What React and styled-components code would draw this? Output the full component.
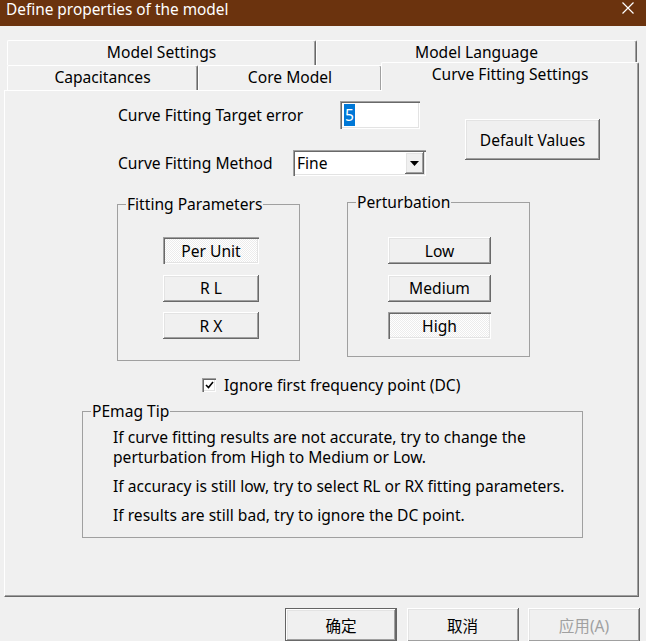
import React from 'react';
import styled, { createGlobalStyle, css } from 'styled-components';

const GlobalStyle = createGlobalStyle`
  html, body {
    margin: 0;
    padding: 0;
    background: #f0f0f0;
  }
  * {
    box-sizing: border-box;
  }
`;

const FONT = `"Noto Sans", "Noto Sans CJK SC", sans-serif`;

const raised = css`
  background: #f0f0f0;
  box-shadow: inset -1px -1px #696969, inset 1px 1px #fff, inset -2px -2px #a0a0a0,
    inset 2px 2px #e3e3e3;
`;

const pressed = css`
  background: repeating-conic-gradient(#fff 0 25%, #ececec 0 50%) 0 0 / 2px 2px;
  box-shadow: inset 1px 1px #a0a0a0, inset 2px 2px #696969, inset -1px -1px #fff,
    inset -2px -2px #e3e3e3;
`;

const sunken = css`
  background: #fff;
  box-shadow: inset 1px 1px #a0a0a0, inset 2px 2px #696969, inset -1px -1px #fff,
    inset -2px -2px #e3e3e3;
`;

const Window = styled.div`
  width: 646px;
  height: 641px;
  overflow: hidden;
  background: #f0f0f0;
  font-family: ${FONT};
  font-size: 15.6px;
  color: #000;
  display: flex;
  flex-direction: column;
`;

const TitleBar = styled.div`
  height: 26px;
  flex-shrink: 0;
  background: #6b330e;
  display: flex;
  justify-content: space-between;
  padding: 0 12px 0 6px;
`;

const Title = styled.div`
  color: #fff;
  font-size: 15.4px;
  line-height: 20px;
`;

const CloseIcon = styled.svg`
  width: 12px;
  height: 12px;
  margin-top: 2px;
`;

const Body = styled.div`
  padding: 14px 7px 0 4px;
  display: flex;
  flex-direction: column;
`;

const TabStrip = styled.div`
  padding-left: 3px;
  display: flex;
  flex-direction: column;
`;

const TabRow = styled.div`
  display: flex;
  height: 25px;
  align-items: flex-end;
`;

const Tab = styled.div`
  width: ${(p) => p.$w}px;
  height: ${(p) => (p.$active ? 29 : 25)}px;
  flex-shrink: 0;
  margin-left: ${(p) => p.$ml || 0}px;
  margin-bottom: ${(p) => (p.$active ? -1 : 0)}px;
  position: relative;
  z-index: ${(p) => (p.$active ? 2 : 1)};
  background: #f0f0f0;
  border-top: 1px solid #fff;
  border-left: 1px solid #fff;
  border-right: 1px solid #696969;
  border-radius: 2px 2px 0 0;
  box-shadow: inset -1px 0 #a0a0a0;
  line-height: ${(p) => (p.$active ? 22 : 23)}px;
  text-align: center;
  white-space: nowrap;
`;

const Panel = styled.div`
  width: 635px;
  height: 507px;
  border-top: 1px solid #fff;
  border-left: 1px solid #fff;
  border-right: 1px solid #696969;
  border-bottom: 1px solid #696969;
  box-shadow: inset -1px -1px #a0a0a0;
  padding-top: 10px;
  display: flex;
  flex-direction: column;
`;

const TopSection = styled.div`
  display: flex;
  padding-left: 113px;
`;

const FormCol = styled.div`
  display: flex;
  flex-direction: column;
  gap: 21px;
`;

const FieldRow = styled.div`
  display: flex;
  align-items: center;
  height: ${(p) => p.$h}px;
`;

const Label = styled.span`
  width: ${(p) => p.$w}px;
  flex-shrink: 0;
  white-space: nowrap;
`;

const TextInput = styled.div`
  ${sunken};
  width: 80px;
  height: 28px;
  padding: 4px 0 0 4px;
  line-height: 20px;
`;

const Selected = styled.span`
  background: #0078d7;
  color: #fff;
  padding: 0 1px;
`;

const Select = styled.div`
  ${sunken};
  width: 133px;
  height: 26px;
  display: flex;
  align-items: center;
  justify-content: space-between;
  padding: 2px 2px 2px 4px;
`;

const ArrowButton = styled.div`
  ${raised};
  width: 19px;
  height: 22px;
  display: flex;
  align-items: center;
  justify-content: center;
`;

const Button = styled.div`
  ${(p) => (p.$pressed ? pressed : raised)};
  width: ${(p) => p.$w}px;
  height: ${(p) => p.$h}px;
  flex-shrink: 0;
  display: flex;
  align-items: center;
  justify-content: center;
  white-space: nowrap;
  color: ${(p) => (p.$disabled ? '#a0a0a0' : '#000')};
  ${(p) =>
    p.$default &&
    css`
      border: 1px solid #646464;
    `}
`;

const DefaultButton = styled(Button)`
  margin-left: 39px;
  margin-top: 18px;
`;

const GroupsRow = styled.div`
  display: flex;
  align-items: flex-start;
  gap: 47px;
  padding-left: 112px;
  margin-top: 17px;
`;

const Group = styled.fieldset`
  width: ${(p) => p.$w}px;
  height: ${(p) => p.$h}px;
  margin: ${(p) => p.$mt || 0}px 0 0 0;
  padding: 0;
  border: 1px solid #a0a0a0;
  min-width: 0;
`;

const Legend = styled.legend`
  margin-left: 8px;
  padding: 0 1px;
  line-height: 18px;
  white-space: nowrap;
`;

const ButtonStack = styled.div`
  display: flex;
  flex-direction: column;
  gap: 10.5px;
  padding: ${(p) => p.$pt}px 0 0 ${(p) => p.$pl}px;
`;

const CheckRow = styled.div`
  display: flex;
  align-items: center;
  gap: 8px;
  height: 20px;
  margin-top: 14px;
  padding-left: 197px;
`;

const CheckBox = styled.div`
  ${sunken};
  width: 14px;
  height: 14px;
  display: flex;
  align-items: center;
  justify-content: center;
`;

const TipGroup = styled(Group)`
  margin: 7px 0 0 77px;
`;

const TipBody = styled.div`
  display: flex;
  flex-direction: column;
  gap: 9px;
  padding: 7px 0 0 30px;
`;

const TipText = styled.p`
  margin: 0;
  line-height: 20px;
`;

const ButtonBar = styled.div`
  display: flex;
  gap: 9.5px;
  padding-left: 281px;
  margin-top: 11px;
`;

export default function App() {
  return (
    <Window>
      <GlobalStyle />
      <TitleBar>
        <Title>Define properties of the model</Title>
        <CloseIcon viewBox="0 0 12 12">
          <path d="M0.5 0.5 L11.5 11.5 M11.5 0.5 L0.5 11.5" stroke="#fff" strokeWidth="1.2" />
        </CloseIcon>
      </TitleBar>
      <Body>
        <TabStrip>
          <TabRow>
            <Tab $w={309}>Model Settings</Tab>
            <Tab $w={321}>Model Language</Tab>
          </TabRow>
          <TabRow>
            <Tab $w={191}>Capacitances</Tab>
            <Tab $w={184}>Core Model</Tab>
            <Tab $w={258} $ml={-1} $active>
              Curve Fitting Settings
            </Tab>
          </TabRow>
        </TabStrip>
        <Panel>
          <TopSection>
            <FormCol>
              <FieldRow $h={28}>
                <Label $w={222}>Curve Fitting Target error</Label>
                <TextInput>
                  <Selected>5</Selected>
                </TextInput>
              </FieldRow>
              <FieldRow $h={26}>
                <Label $w={175}>Curve Fitting Method</Label>
                <Select>
                  <span>Fine</span>
                  <ArrowButton>
                    <svg width="9" height="5" viewBox="0 0 9 5">
                      <path d="M0 0 H9 L4.5 5 Z" fill="#000" />
                    </svg>
                  </ArrowButton>
                </Select>
              </FieldRow>
            </FormCol>
            <DefaultButton $w={135} $h={41}>
              Default Values
            </DefaultButton>
          </TopSection>

          <GroupsRow>
            <Group $w={183} $h={166} $mt={2}>
              <Legend>Fitting Parameters</Legend>
              <ButtonStack $pt={24} $pl={45}>
                <Button $w={96} $h={27} $pressed>
                  Per Unit
                </Button>
                <Button $w={96} $h={27}>
                  R L
                </Button>
                <Button $w={96} $h={27}>
                  R X
                </Button>
              </ButtonStack>
            </Group>
            <Group $w={183} $h={164}>
              <Legend>Perturbation</Legend>
              <ButtonStack $pt={26} $pl={40}>
                <Button $w={103} $h={27}>
                  Low
                </Button>
                <Button $w={103} $h={27}>
                  Medium
                </Button>
                <Button $w={103} $h={27} $pressed>
                  High
                </Button>
              </ButtonStack>
            </Group>
          </GroupsRow>

          <CheckRow>
            <CheckBox>
              <svg width="9" height="8" viewBox="0 0 9 8">
                <path d="M1 4 L3.5 6.5 L8 1" stroke="#000" strokeWidth="1.6" fill="none" />
              </svg>
            </CheckBox>
            <span>Ignore first frequency point (DC)</span>
          </CheckRow>

          <TipGroup $w={501} $h={136}>
            <Legend>PEmag Tip</Legend>
            <TipBody>
              <TipText>
                If curve fitting results are not accurate, try to change the
                <br />
                perturbation from High to Medium or Low.
              </TipText>
              <TipText>If accuracy is still low, try to select RL or RX fitting parameters.</TipText>
              <TipText>If results are still bad, try to ignore the DC point.</TipText>
            </TipBody>
          </TipGroup>
        </Panel>
        <ButtonBar>
          <Button $w={112} $h={34} $default>
            确定
          </Button>
          <Button $w={112} $h={34}>
            取消
          </Button>
          <Button $w={112} $h={34} $disabled>
            应用(A)
          </Button>
        </ButtonBar>
      </Body>
    </Window>
  );
}
